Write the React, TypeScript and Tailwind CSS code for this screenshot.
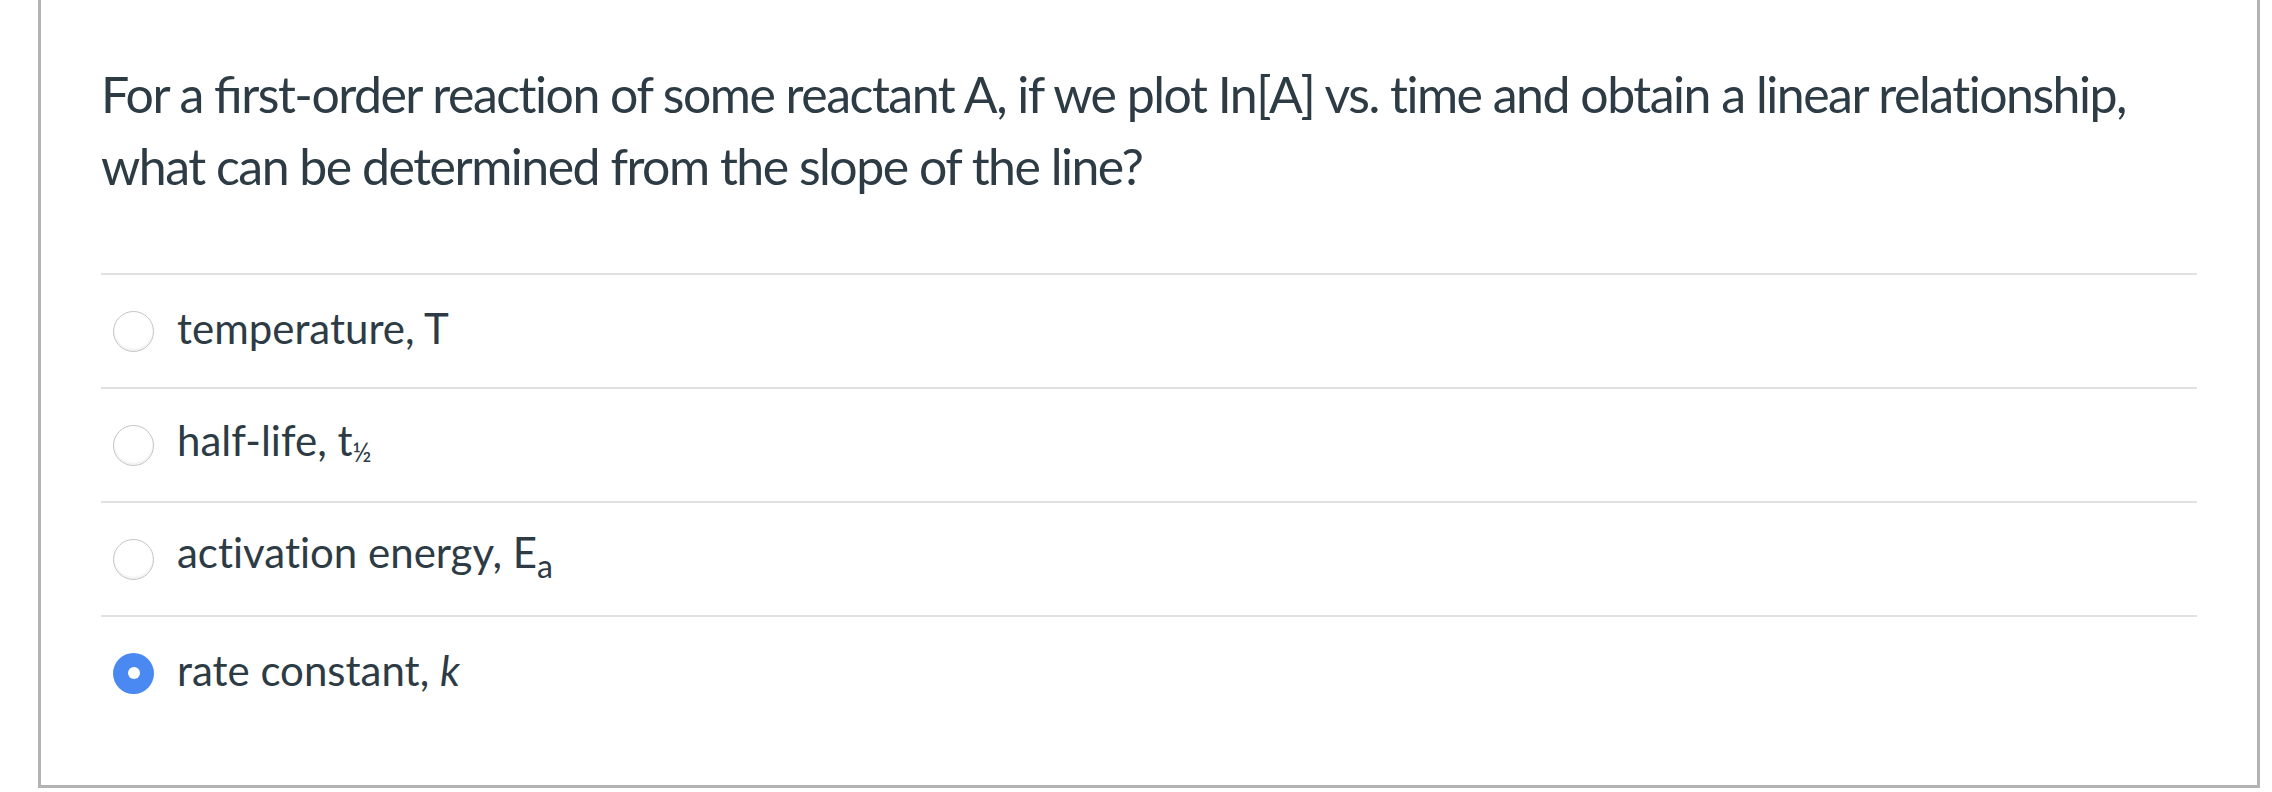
import React from "react";

type Option = {
  id: string;
  label: React.ReactNode;
  selected?: boolean;
};

const options: Option[] = [
  { id: "temp", label: "temperature, T" },
  {
    id: "half",
    label: (
      <>
        half-life, t<span className="align-[-6px] text-[26px]">½</span>
      </>
    ),
  },
  {
    id: "ea",
    label: (
      <>
        activation energy, E<span className="align-[-10px] text-[32px]">a</span>
      </>
    ),
  },
  {
    id: "k",
    label: (
      <>
        rate constant, <i>k</i>
      </>
    ),
    selected: true,
  },
];

function Radio({ checked }: { checked?: boolean }) {
  if (checked) {
    return (
      <span className="flex h-[41px] w-[41px] shrink-0 items-center justify-center rounded-full bg-[#4a88f2]">
        <span className="h-[12px] w-[12px] rounded-full bg-white" />
      </span>
    );
  }
  return (
    <span className="block h-[41px] w-[41px] shrink-0 rounded-full border-[1.5px] border-[#c4c4c4] bg-white shadow-[inset_0_-2px_2px_rgba(0,0,0,0.06)]" />
  );
}

export default function App() {
  return (
    <div
      className="min-h-[792px] bg-white [font-variant-ligatures:none]"
      style={{ fontFamily: "Lato, 'Open Sans', sans-serif" }}
    >
      <div className="ml-[38px] w-[2222px] border-x-[3px] border-b-[3px] border-[#b3b3b3] px-[60px] pb-[56px] pt-[58px] text-[#2d3b45]">
        {/* fi ligature kept by hand, other ligatures (ti) are off like the original */}
        <p className="text-[50px] leading-[72px] tracking-[-1.5px]">
          For a ﬁrst-order reaction of some reactant A, if we plot In[A] vs. time and obtain a linear relationship,
          what can be determined from the slope of the line?
        </p>

        <div className="mt-[71px] flex flex-col">
          {options.map((opt) => (
            <label
              key={opt.id}
              className="flex h-[114px] items-center gap-[23px] border-t-2 border-[#e1e1e1] pl-[12px]"
            >
              <Radio checked={opt.selected} />
              <span className="pb-[6px] text-[42px] leading-none">{opt.label}</span>
            </label>
          ))}
        </div>
      </div>
    </div>
  );
}
